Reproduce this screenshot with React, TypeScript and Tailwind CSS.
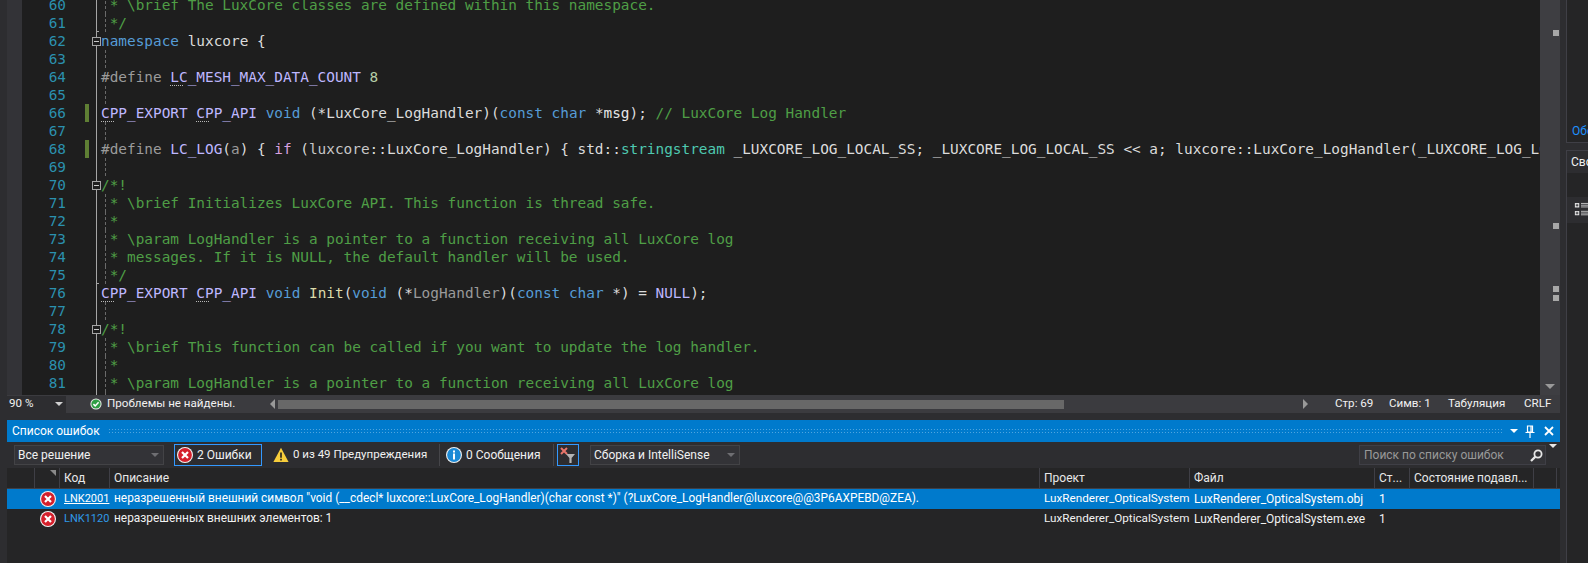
const KW = "text-[#569cd6]";
const MACRO = "text-[#beb7ff]";
const COMMENT = "text-[#4f9e46]";
const PRE = "text-[#9b9b9b]";
const PARAM = "text-[#9a9a9a]";
const FN = "text-[#dcdcaa]";
const TYPE = "text-[#4ec9b0]";
const CTRL = "text-[#d8a0df]";
const NUM = "text-[#b5cea8]";
const NS = "text-[#c8c8c8]";
const TXT = "text-[#dcdcdc]";

type Token = { t: string; c?: string; hint?: boolean };
type Line = { n: number; tokens: Token[]; guide?: boolean; changed?: boolean; fold?: boolean; tick?: boolean };

const cm = (n: number, t: string, tick = false): Line => ({ n, tokens: [{ t, c: COMMENT }], guide: true, tick });
const blank = (n: number): Line => ({ n, tokens: [], guide: true });

const lines: Line[] = [
  cm(60, " * \\brief The LuxCore classes are defined within this namespace."),
  cm(61, " */", true),
  { n: 62, fold: true, tokens: [{ t: "namespace", c: KW }, { t: " luxcore {", c: TXT }] },
  blank(63),
  { n: 64, tokens: [{ t: "#define ", c: PRE }, { t: "LC_MESH_MAX_DATA_COUNT", c: MACRO, hint: true }, { t: " " }, { t: "8", c: NUM }] },
  blank(65),
  {
    n: 66,
    changed: true,
    tokens: [
      { t: "CPP_EXPORT", c: MACRO, hint: true },
      { t: " " },
      { t: "CPP_API", c: MACRO, hint: true },
      { t: " " },
      { t: "void", c: KW },
      { t: " (*LuxCore_LogHandler)(", c: TXT },
      { t: "const char", c: KW },
      { t: " *", c: TXT },
      { t: "msg", c: "text-[#e8e8e8]" },
      { t: "); ", c: TXT },
      { t: "// LuxCore Log Handler", c: COMMENT },
    ],
  },
  blank(67),
  {
    n: 68,
    changed: true,
    tokens: [
      { t: "#define ", c: PRE },
      { t: "LC_LOG", c: MACRO },
      { t: "(", c: TXT },
      { t: "a", c: PARAM },
      { t: ") { ", c: TXT },
      { t: "if", c: CTRL },
      { t: " (", c: TXT },
      { t: "luxcore", c: NS },
      { t: "::LuxCore_LogHandler) { std::", c: TXT },
      { t: "stringstream", c: TYPE },
      { t: " _LUXCORE_LOG_LOCAL_SS; _LUXCORE_LOG_LOCAL_SS << a; luxcore::LuxCore_LogHandler(_LUXCORE_LOG_LOCAL_SS.str().c_str()); }", c: TXT },
    ],
  },
  blank(69),
  { n: 70, fold: true, tokens: [{ t: "/*!", c: COMMENT }] },
  cm(71, " * \\brief Initializes LuxCore API. This function is thread safe."),
  cm(72, " *"),
  cm(73, " * \\param LogHandler is a pointer to a function receiving all LuxCore log"),
  cm(74, " * messages. If it is NULL, the default handler will be used."),
  cm(75, " */", true),
  {
    n: 76,
    tokens: [
      { t: "CPP_EXPORT", c: MACRO, hint: true },
      { t: " " },
      { t: "CPP_API", c: MACRO, hint: true },
      { t: " " },
      { t: "void", c: KW },
      { t: " " },
      { t: "Init", c: FN },
      { t: "(", c: TXT },
      { t: "void", c: KW },
      { t: " (*", c: TXT },
      { t: "LogHandler", c: PARAM },
      { t: ")(", c: TXT },
      { t: "const char", c: KW },
      { t: " *) = ", c: TXT },
      { t: "NULL", c: MACRO },
      { t: ");", c: TXT },
    ],
  },
  blank(77),
  { n: 78, fold: true, tokens: [{ t: "/*!", c: COMMENT }] },
  cm(79, " * \\brief This function can be called if you want to update the log handler."),
  cm(80, " *"),
  cm(81, " * \\param LogHandler is a pointer to a function receiving all LuxCore log"),
  blank(82),
];

function ErrorIcon() {
  return (
    <svg width="16" height="16" viewBox="0 0 16 16" className="shrink-0">
      <circle cx="8" cy="8" r="8" fill="#f4f4f4" />
      <circle cx="8" cy="8" r="6.9" fill="#d5202c" />
      <path d="M5 5l6 6M11 5l-6 6" stroke="#fff" strokeWidth="2.2" />
    </svg>
  );
}

function WarnIcon() {
  return (
    <svg width="16" height="16" viewBox="0 0 16 16" className="shrink-0">
      <path d="M8 .8L15.6 15H.4z" fill="#f7cd3b" />
      <path d="M8 5.5v5.2M8 11.8v1.6" stroke="#1e1e1e" strokeWidth="1.6" />
    </svg>
  );
}

function InfoIcon() {
  return (
    <svg width="16" height="16" viewBox="0 0 16 16" className="shrink-0">
      <circle cx="8" cy="8" r="8" fill="#f0f0f0" />
      <circle cx="8" cy="8" r="6.9" fill="#1c8ad6" />
      <path d="M8 3.6v1.8M8 6.6v5.8" stroke="#fff" strokeWidth="2" />
    </svg>
  );
}

function CheckIcon() {
  return (
    <svg width="12" height="12" viewBox="0 0 12 12" className="shrink-0">
      <circle cx="6" cy="6" r="5.6" fill="#e8e8e8" />
      <circle cx="6" cy="6" r="4.6" fill="#2f9e44" />
      <path d="M3.4 6.1l1.8 1.8 3.4-3.6" stroke="#fff" strokeWidth="1.5" fill="none" />
    </svg>
  );
}

function FilterIcon() {
  return (
    <svg width="18" height="18" viewBox="0 0 18 18">
      <path d="M2 2l6 6M8 2l-6 6" stroke="#e8756a" strokeWidth="2" />
      <path d="M7 8h9l-3.4 4v5h-2.2v-5z" fill="#b4b4b4" />
    </svg>
  );
}

function PinIcon() {
  return (
    <svg width="10" height="13" viewBox="0 0 10 13">
      <path d="M2.5 1h5v6h-5zM6 1v6M0.5 7.5h9M5 8v5" stroke="#fff" strokeWidth="1.2" fill="none" />
    </svg>
  );
}

function CloseIcon() {
  return (
    <svg width="10" height="10" viewBox="0 0 10 10">
      <path d="M1 1l8 8M9 1l-8 8" stroke="#fff" strokeWidth="1.8" />
    </svg>
  );
}

function SearchIcon() {
  return (
    <svg width="13" height="13" viewBox="0 0 13 13">
      <circle cx="8" cy="5" r="3.6" stroke="#e6e6e6" strokeWidth="1.8" fill="none" />
      <path d="M5.4 7.6L1 12" stroke="#e6e6e6" strokeWidth="2.2" />
    </svg>
  );
}

function Caret({ className }: { className: string }) {
  return <span className={`h-0 w-0 border-x-[4px] border-t-[4px] border-x-transparent ${className}`} />;
}

function Sep() {
  return <span className="h-[22px] w-px shrink-0 bg-[#46464a]" />;
}

function CodeRow({ line }: { line: Line }) {
  return (
    <div className="flex h-[18px] items-center">
      <span className="w-[44px] shrink-0 text-right text-[#2b91af]">{line.n}</span>
      <span className="w-[19px] shrink-0" />
      <span className={`h-[18px] w-[4px] shrink-0 ${line.changed ? "bg-[#5f7f34]" : ""}`} />
      <span className="relative h-[18px] w-[12px] shrink-0">
        <span className="absolute bottom-0 left-[7px] top-0 w-px bg-[#a5a5a5]" />
        {line.tick && <span className="absolute bottom-0 left-[7px] h-px w-[3px] bg-[#a5a5a5]" />}
        {line.fold && (
          <span className="absolute left-[3px] top-[5px] flex h-[9px] w-[9px] items-center justify-center border border-[#a5a5a5] bg-[#1e1e1e]">
            <span className="h-px w-[5px] bg-[#c8c8c8]" />
          </span>
        )}
      </span>
      <span className="relative h-[18px] whitespace-pre leading-[18px]">
        {line.guide && <span className="absolute bottom-0 left-[4px] top-0 border-l border-dashed border-[#6a6a6a]" />}
        {line.tokens.map((tok, i) => (
          <span key={i} className={`relative ${tok.c ?? ""}`}>
            {tok.t}
            {tok.hint && <span className="absolute bottom-[-1px] left-0 w-[13px] border-b border-dotted border-[#b8b8b8]" />}
          </span>
        ))}
      </span>
    </div>
  );
}

const GRID = "grid grid-cols-[28px_25px_50px_930px_150px_185px_35px_124px_23px]";

function ErrorRow(props: { code: string; desc: string; file: string; selected?: boolean }) {
  const { code, desc, file, selected } = props;
  return (
    <div className={`${GRID} h-[20px] items-center whitespace-nowrap text-[#f1f1f1] ${selected ? "bg-[#007acc] text-white" : ""}`}>
      <span />
      <span className="pl-[5px]">
        <ErrorIcon />
      </span>
      <span className={`pl-[4px] text-[11px] ${selected ? "text-white underline" : "text-[#2f9ae8]"}`}>{code}</span>
      <span className="pl-[4px] text-[11.9px]">{desc}</span>
      <span className="pl-[4px] text-[11.7px]">LuxRenderer_OpticalSystem</span>
      <span className="pl-[4px]">{file}</span>
      <span className="pl-[4px]">1</span>
      <span />
      <span />
    </div>
  );
}

function HeaderCell({ children }: { children?: React.ReactNode }) {
  return <span className="flex h-[20px] items-center border-r border-[#3f3f46] pl-[4px]">{children}</span>;
}

export default function App() {
  return (
    <div className="flex h-[563px] w-[1588px] overflow-hidden bg-[#2d2d30] font-['Roboto',sans-serif] text-[12px] text-[#f1f1f1]">
      <div className="flex w-[1560px] shrink-0 flex-col">
        {/* editor */}
        <div className="flex h-[395px] shrink-0">
          <div className="w-[7px] shrink-0 bg-[#2d2d30]" />
          <div className="w-[15px] shrink-0 bg-[#333337]" />
          <div className="min-w-0 flex-1 overflow-hidden bg-[#1e1e1e] font-['DejaVu_Sans_Mono',monospace] text-[14.4px] leading-[18px]">
            <div className="-mt-1">
              {lines.map((l) => (
                <CodeRow key={l.n} line={l} />
              ))}
            </div>
          </div>
          <div className="relative w-[20px] shrink-0 bg-[#3e3e42]">
            <span className="absolute left-[13px] top-[30px] h-[6px] w-[6px] bg-[#a8a8a8]" />
            <span className="absolute left-[13px] top-[223px] h-[6px] w-[6px] bg-[#a8a8a8]" />
            <span className="absolute left-[13px] top-[286px] h-[6px] w-[6px] bg-[#a8a8a8]" />
            <span className="absolute left-[13px] top-[295px] h-[6px] w-[6px] bg-[#a8a8a8]" />
            <span className="absolute left-[5px] top-[384px] h-0 w-0 border-x-[5px] border-t-[5px] border-x-transparent border-t-[#999999]" />
          </div>
        </div>

        {/* status strip */}
        <div className="flex h-[18px] shrink-0 items-center bg-[#3b3b3f] text-[11.6px] text-[#f1f1f1]">
          <div className="flex h-full w-[7px] shrink-0 bg-[#2d2d30]" />
          <div className="flex h-[17px] w-[59px] shrink-0 items-center justify-between bg-[#2d2d30] pl-[2px] pr-[3px]">
            <span>90 %</span>
            <Caret className="border-t-[#d0d0d0]" />
          </div>
          <div className="ml-[24px] flex w-[180px] shrink-0 items-center gap-[5px]">
            <CheckIcon />
            <span>Проблемы не найдены.</span>
          </div>
          <span className="h-0 w-0 shrink-0 border-y-[5px] border-r-[5px] border-y-transparent border-r-[#999999]" />
          <div className="ml-[3px] flex h-[9px] w-[1025px] shrink-0 items-center">
            <div className="h-[9px] w-[786px] bg-[#686868]" />
          </div>
          <span className="h-0 w-0 shrink-0 border-y-[5px] border-l-[5px] border-y-transparent border-l-[#999999]" />
          <span className="ml-[27px] w-[54px] shrink-0">Стр: 69</span>
          <span className="w-[59px] shrink-0">Симв: 1</span>
          <span className="w-[76px] shrink-0">Табуляция</span>
          <span className="shrink-0">CRLF</span>
        </div>

        <div className="h-[7px] shrink-0" />

        {/* error list */}
        <div className="ml-[7px] flex min-h-0 flex-1 flex-col bg-[#252526]">
          <div className="flex h-[22px] shrink-0 items-center bg-[#007acc] pl-[5px] pr-[5px] text-white">
            <span>Список ошибок</span>
            <span className="mx-[8px] h-[6px] flex-1 bg-[radial-gradient(#4fa5df_0.8px,transparent_1px)] bg-[length:3px_3px]" />
            <Caret className="mr-[7px] border-t-white" />
            <span className="mr-[9px] flex">
              <PinIcon />
            </span>
            <span className="mr-[1px] flex">
              <CloseIcon />
            </span>
          </div>

          <div className="flex h-[26px] shrink-0 items-center whitespace-nowrap bg-[#2d2d30] pl-[7px]">
            <div className="flex h-[20px] w-[150px] shrink-0 items-center justify-between border border-[#434346] bg-[#333337] pl-[3px] pr-[4px]">
              <span>Все решение</span>
              <Caret className="border-t-[#6e6e72]" />
            </div>
            <span className="ml-[7px]">
              <Sep />
            </span>
            <div className="ml-[3px] flex h-[22px] w-[88px] shrink-0 items-center gap-[4px] border border-[#3399ff] pl-[2px]">
              <ErrorIcon />
              <span>2 Ошибки</span>
            </div>
            <span className="ml-[4px]">
              <Sep />
            </span>
            <div className="ml-[7px] flex w-[166px] shrink-0 items-center gap-[4px]">
              <WarnIcon />
              <span className="text-[11.5px]">0 из 49 Предупреждения</span>
            </div>
            <Sep />
            <div className="ml-[6px] flex w-[107px] shrink-0 items-center gap-[4px]">
              <InfoIcon />
              <span>0 Сообщения</span>
            </div>
            <Sep />
            <div className="ml-[3px] flex h-[22px] w-[22px] shrink-0 items-center justify-center border border-[#3399ff]">
              <FilterIcon />
            </div>
            <span className="ml-[4px]">
              <Sep />
            </span>
            <div className="ml-[7px] flex h-[20px] w-[150px] shrink-0 items-center justify-between border border-[#434346] bg-[#333337] pl-[3px] pr-[4px]">
              <span>Сборка и IntelliSense</span>
              <Caret className="border-t-[#6e6e72]" />
            </div>
            <div className="ml-auto flex h-[20px] w-[187px] shrink-0 items-center justify-between border border-[#3f3f46] bg-[#333337] pl-[4px] pr-[2px] text-[#999999]">
              <span>Поиск по списку ошибок</span>
              <SearchIcon />
            </div>
            <span className="ml-[3px] mr-[3px]">
              <Caret className="border-t-[#e6e6e6]" />
            </span>
          </div>

          <div className={`${GRID} h-[21px] shrink-0 whitespace-nowrap border-b border-[#3f3f46] text-[#e8e8e8]`}>
            <HeaderCell />
            <span className="relative flex h-[20px] items-center border-r border-[#3f3f46]">
              <svg width="6" height="6" viewBox="0 0 6 6" className="absolute right-[3px] top-[2px]">
                <path d="M0 0h6v6z" fill="#8a8a8a" />
              </svg>
            </span>
            <HeaderCell>Код</HeaderCell>
            <HeaderCell>Описание</HeaderCell>
            <HeaderCell>Проект</HeaderCell>
            <HeaderCell>Файл</HeaderCell>
            <HeaderCell>Ст...</HeaderCell>
            <HeaderCell>Состояние подавл...</HeaderCell>
            <HeaderCell />
          </div>

          <ErrorRow
            selected
            code="LNK2001"
            desc={'неразрешенный внешний символ "void (__cdecl* luxcore::LuxCore_LogHandler)(char const *)" (?LuxCore_LogHandler@luxcore@@3P6AXPEBD@ZEA).'}
            file="LuxRenderer_OpticalSystem.obj"
          />
          <ErrorRow code="LNK1120" desc="неразрешенных внешних элементов: 1" file="LuxRenderer_OpticalSystem.exe" />
        </div>
      </div>

      {/* side panels */}
      <div className="ml-[6px] flex min-w-0 flex-1 flex-col whitespace-nowrap">
        <div className="flex h-[143px] shrink-0 items-end overflow-hidden border-b border-l border-[#3f3f46] bg-[#252526] pb-[2px] pl-[5px] text-[#1e90ff]">
          Обозреватель
        </div>
        <div className="h-[7px] shrink-0" />
        <div className="flex min-h-0 flex-1 flex-col overflow-hidden border-l border-t border-[#3f3f46] bg-[#252526]">
          <div className="flex h-[22px] shrink-0 items-center bg-[#2d2d30] pl-[4px]">Свойства</div>
          <div className="h-[24px] shrink-0" />
          <div className="flex h-[26px] shrink-0 items-center bg-[#2d2d30] pl-[7px]">
            <svg width="16" height="18" viewBox="0 0 16 18">
              <path d="M1 1h5v5H1zM1 10h5v5H1z" fill="#e0e0e0" />
              <path d="M2 3.5h3M3.5 2v3M2 12.5h3M3.5 11v3" stroke="#2d2d30" />
              <path d="M8 1.5h8M8 3.5h8M8 5.5h8M8 10.5h8M8 12.5h8M8 14.5h8" stroke="#d0d0d0" />
            </svg>
          </div>
        </div>
      </div>
    </div>
  );
}
